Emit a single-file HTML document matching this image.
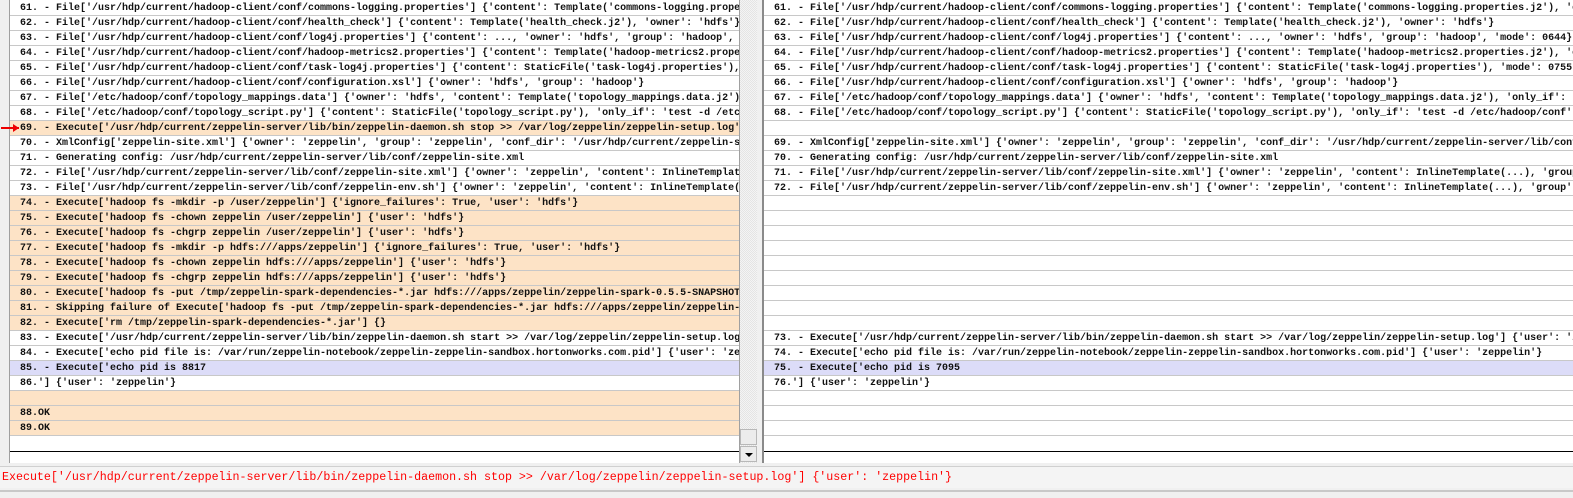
<!DOCTYPE html>
<html><head><meta charset="utf-8"><style>
*{margin:0;padding:0;box-sizing:border-box}
body{width:1573px;height:498px;background:#f0f0f0;position:relative;overflow:hidden;font-family:"Liberation Mono","Courier New",monospace}
.pane{position:absolute;top:0;height:463px;background:#fff;overflow:hidden}
#L{left:9px;width:731px;border-left:1px solid #a0a0a0;border-right:1px solid #a0a0a0}
#R{left:762px;width:811px;border-left:2px solid #8a8a8a}
.row{position:absolute;left:0;width:100%;height:15px;border-bottom:1px solid #c8c8c8;font-size:10px;font-weight:bold;line-height:16px;white-space:pre;color:#111;letter-spacing:0}
#L .row{padding-left:10px}
#R .row{padding-left:10px}
.p{background:#fde3c6}
.b{background:#dcdcf8}
.blk{position:absolute;left:0;width:100%;top:451px;height:1px;background:#000}
#sb{position:absolute;left:740px;top:0;width:17px;height:463px;background:repeating-conic-gradient(#f4f4f4 0 25%,#e4e4e4 0 50%) 0 0/2px 2px}
#thumb{position:absolute;left:740px;top:429px;width:17px;height:16px;background:#ececec;border:1px solid #b8b8b8}
#arr{position:absolute;left:740px;top:446px;width:17px;height:16px;background:#ececec;border:1px solid #b8b8b8}
#arr:after{content:"";position:absolute;left:4px;top:6px;border-left:4px solid transparent;border-right:4px solid transparent;border-top:4px solid #000}
#gap{position:absolute;left:757px;top:0;width:5px;height:463px;background:#f0f0f0}
#bot{position:absolute;left:0;top:466px;width:1573px;height:22px;background:#f4f4f4;border-top:1px solid #d0d0d0;color:#f00;font-size:11.65px;line-height:22px;padding-left:2px;white-space:pre}
#bl{position:absolute;left:0;top:490px;width:1573px;height:2px;background:#c8c8c8}
.arrow{position:absolute;left:1px;top:127px;width:18px;height:2px;background:#e00;z-index:5}
.arrow:after{content:"";position:absolute;right:0;top:-3px;border-top:4px solid transparent;border-bottom:4px solid transparent;border-left:6px solid #e00}
</style></head><body>
<div id="L" class="pane">
<div class="row" style="top:1px">61. - File['/usr/hdp/current/hadoop-client/conf/commons-logging.properties'] {'content': Template('commons-logging.properties.j2'),</div>
<div class="row" style="top:16px">62. - File['/usr/hdp/current/hadoop-client/conf/health_check'] {'content': Template('health_check.j2'), 'owner': 'hdfs'}</div>
<div class="row" style="top:31px">63. - File['/usr/hdp/current/hadoop-client/conf/log4j.properties'] {'content': ..., 'owner': 'hdfs', 'group': 'hadoop', 'mode': 0644}</div>
<div class="row" style="top:46px">64. - File['/usr/hdp/current/hadoop-client/conf/hadoop-metrics2.properties'] {'content': Template('hadoop-metrics2.properties.j2'),</div>
<div class="row" style="top:61px">65. - File['/usr/hdp/current/hadoop-client/conf/task-log4j.properties'] {'content': StaticFile('task-log4j.properties'), 'mode': 0755}</div>
<div class="row" style="top:76px">66. - File['/usr/hdp/current/hadoop-client/conf/configuration.xsl'] {'owner': 'hdfs', 'group': 'hadoop'}</div>
<div class="row" style="top:91px">67. - File['/etc/hadoop/conf/topology_mappings.data'] {'owner': 'hdfs', 'content': Template('topology_mappings.data.j2'), 'only_if':</div>
<div class="row" style="top:106px">68. - File['/etc/hadoop/conf/topology_script.py'] {'content': StaticFile('topology_script.py'), 'only_if': 'test -d /etc/hadoop/conf'}</div>
<div class="row p" style="top:121px">69. - Execute['/usr/hdp/current/zeppelin-server/lib/bin/zeppelin-daemon.sh stop >> /var/log/zeppelin/zeppelin-setup.log']</div>
<div class="row" style="top:136px">70. - XmlConfig['zeppelin-site.xml'] {'owner': 'zeppelin', 'group': 'zeppelin', 'conf_dir': '/usr/hdp/current/zeppelin-server/lib/conf'}</div>
<div class="row" style="top:151px">71. - Generating config: /usr/hdp/current/zeppelin-server/lib/conf/zeppelin-site.xml</div>
<div class="row" style="top:166px">72. - File['/usr/hdp/current/zeppelin-server/lib/conf/zeppelin-site.xml'] {'owner': 'zeppelin', 'content': InlineTemplate(...)}</div>
<div class="row" style="top:181px">73. - File['/usr/hdp/current/zeppelin-server/lib/conf/zeppelin-env.sh'] {'owner': 'zeppelin', 'content': InlineTemplate(...)}</div>
<div class="row p" style="top:196px">74. - Execute['hadoop fs -mkdir -p /user/zeppelin'] {'ignore_failures': True, 'user': 'hdfs'}</div>
<div class="row p" style="top:211px">75. - Execute['hadoop fs -chown zeppelin /user/zeppelin'] {'user': 'hdfs'}</div>
<div class="row p" style="top:226px">76. - Execute['hadoop fs -chgrp zeppelin /user/zeppelin'] {'user': 'hdfs'}</div>
<div class="row p" style="top:241px">77. - Execute['hadoop fs -mkdir -p hdfs:///apps/zeppelin'] {'ignore_failures': True, 'user': 'hdfs'}</div>
<div class="row p" style="top:256px">78. - Execute['hadoop fs -chown zeppelin hdfs:///apps/zeppelin'] {'user': 'hdfs'}</div>
<div class="row p" style="top:271px">79. - Execute['hadoop fs -chgrp zeppelin hdfs:///apps/zeppelin'] {'user': 'hdfs'}</div>
<div class="row p" style="top:286px">80. - Execute['hadoop fs -put /tmp/zeppelin-spark-dependencies-*.jar hdfs:///apps/zeppelin/zeppelin-spark-0.5.5-SNAPSHOT.jar']</div>
<div class="row p" style="top:301px">81. - Skipping failure of Execute['hadoop fs -put /tmp/zeppelin-spark-dependencies-*.jar hdfs:///apps/zeppelin/zeppelin-spark</div>
<div class="row p" style="top:316px">82. - Execute['rm /tmp/zeppelin-spark-dependencies-*.jar'] {}</div>
<div class="row" style="top:331px">83. - Execute['/usr/hdp/current/zeppelin-server/lib/bin/zeppelin-daemon.sh start >> /var/log/zeppelin/zeppelin-setup.log']</div>
<div class="row" style="top:346px">84. - Execute['echo pid file is: /var/run/zeppelin-notebook/zeppelin-zeppelin-sandbox.hortonworks.com.pid'] {'user': 'zeppelin'}</div>
<div class="row b" style="top:361px">85. - Execute['echo pid is 8817</div>
<div class="row" style="top:376px">86.'] {'user': 'zeppelin'}</div>
<div class="row p" style="top:391px"> </div>
<div class="row p" style="top:406px">88.OK</div>
<div class="row p" style="top:421px">89.OK</div>
<div class="blk"></div>
</div>
<div class="arrow"></div>
<div id="sb"></div><div id="thumb"></div><div id="arr"></div>
<div id="gap"></div>
<div id="R" class="pane">
<div class="row" style="top:1px">61. - File['/usr/hdp/current/hadoop-client/conf/commons-logging.properties'] {'content': Template('commons-logging.properties.j2'), 'owner'</div>
<div class="row" style="top:16px">62. - File['/usr/hdp/current/hadoop-client/conf/health_check'] {'content': Template('health_check.j2'), 'owner': 'hdfs'}</div>
<div class="row" style="top:31px">63. - File['/usr/hdp/current/hadoop-client/conf/log4j.properties'] {'content': ..., 'owner': 'hdfs', 'group': 'hadoop', 'mode': 0644}</div>
<div class="row" style="top:46px">64. - File['/usr/hdp/current/hadoop-client/conf/hadoop-metrics2.properties'] {'content': Template('hadoop-metrics2.properties.j2'), 'o</div>
<div class="row" style="top:61px">65. - File['/usr/hdp/current/hadoop-client/conf/task-log4j.properties'] {'content': StaticFile('task-log4j.properties'), 'mode': 0755}</div>
<div class="row" style="top:76px">66. - File['/usr/hdp/current/hadoop-client/conf/configuration.xsl'] {'owner': 'hdfs', 'group': 'hadoop'}</div>
<div class="row" style="top:91px">67. - File['/etc/hadoop/conf/topology_mappings.data'] {'owner': 'hdfs', 'content': Template('topology_mappings.data.j2'), 'only_if': 'test</div>
<div class="row" style="top:106px">68. - File['/etc/hadoop/conf/topology_script.py'] {'content': StaticFile('topology_script.py'), 'only_if': 'test -d /etc/hadoop/conf'}</div>
<div class="row" style="top:121px"> </div>
<div class="row" style="top:136px">69. - XmlConfig['zeppelin-site.xml'] {'owner': 'zeppelin', 'group': 'zeppelin', 'conf_dir': '/usr/hdp/current/zeppelin-server/lib/conf'}</div>
<div class="row" style="top:151px">70. - Generating config: /usr/hdp/current/zeppelin-server/lib/conf/zeppelin-site.xml</div>
<div class="row" style="top:166px">71. - File['/usr/hdp/current/zeppelin-server/lib/conf/zeppelin-site.xml'] {'owner': 'zeppelin', 'content': InlineTemplate(...), 'group'</div>
<div class="row" style="top:181px">72. - File['/usr/hdp/current/zeppelin-server/lib/conf/zeppelin-env.sh'] {'owner': 'zeppelin', 'content': InlineTemplate(...), 'group'</div>
<div class="row" style="top:196px"> </div>
<div class="row" style="top:211px"> </div>
<div class="row" style="top:226px"> </div>
<div class="row" style="top:241px"> </div>
<div class="row" style="top:256px"> </div>
<div class="row" style="top:271px"> </div>
<div class="row" style="top:286px"> </div>
<div class="row" style="top:301px"> </div>
<div class="row" style="top:316px"> </div>
<div class="row" style="top:331px">73. - Execute['/usr/hdp/current/zeppelin-server/lib/bin/zeppelin-daemon.sh start >> /var/log/zeppelin/zeppelin-setup.log'] {'user': 'ze</div>
<div class="row" style="top:346px">74. - Execute['echo pid file is: /var/run/zeppelin-notebook/zeppelin-zeppelin-sandbox.hortonworks.com.pid'] {'user': 'zeppelin'}</div>
<div class="row b" style="top:361px">75. - Execute['echo pid is 7095</div>
<div class="row" style="top:376px">76.'] {'user': 'zeppelin'}</div>
<div class="row" style="top:391px"> </div>
<div class="row" style="top:406px"> </div>
<div class="row" style="top:421px"> </div>
<div class="blk"></div>
</div>
<div id="bot">Execute['/usr/hdp/current/zeppelin-server/lib/bin/zeppelin-daemon.sh stop &gt;&gt; /var/log/zeppelin/zeppelin-setup.log'] {'user': 'zeppelin'}</div>
<div id="bl"></div>
</body></html>
